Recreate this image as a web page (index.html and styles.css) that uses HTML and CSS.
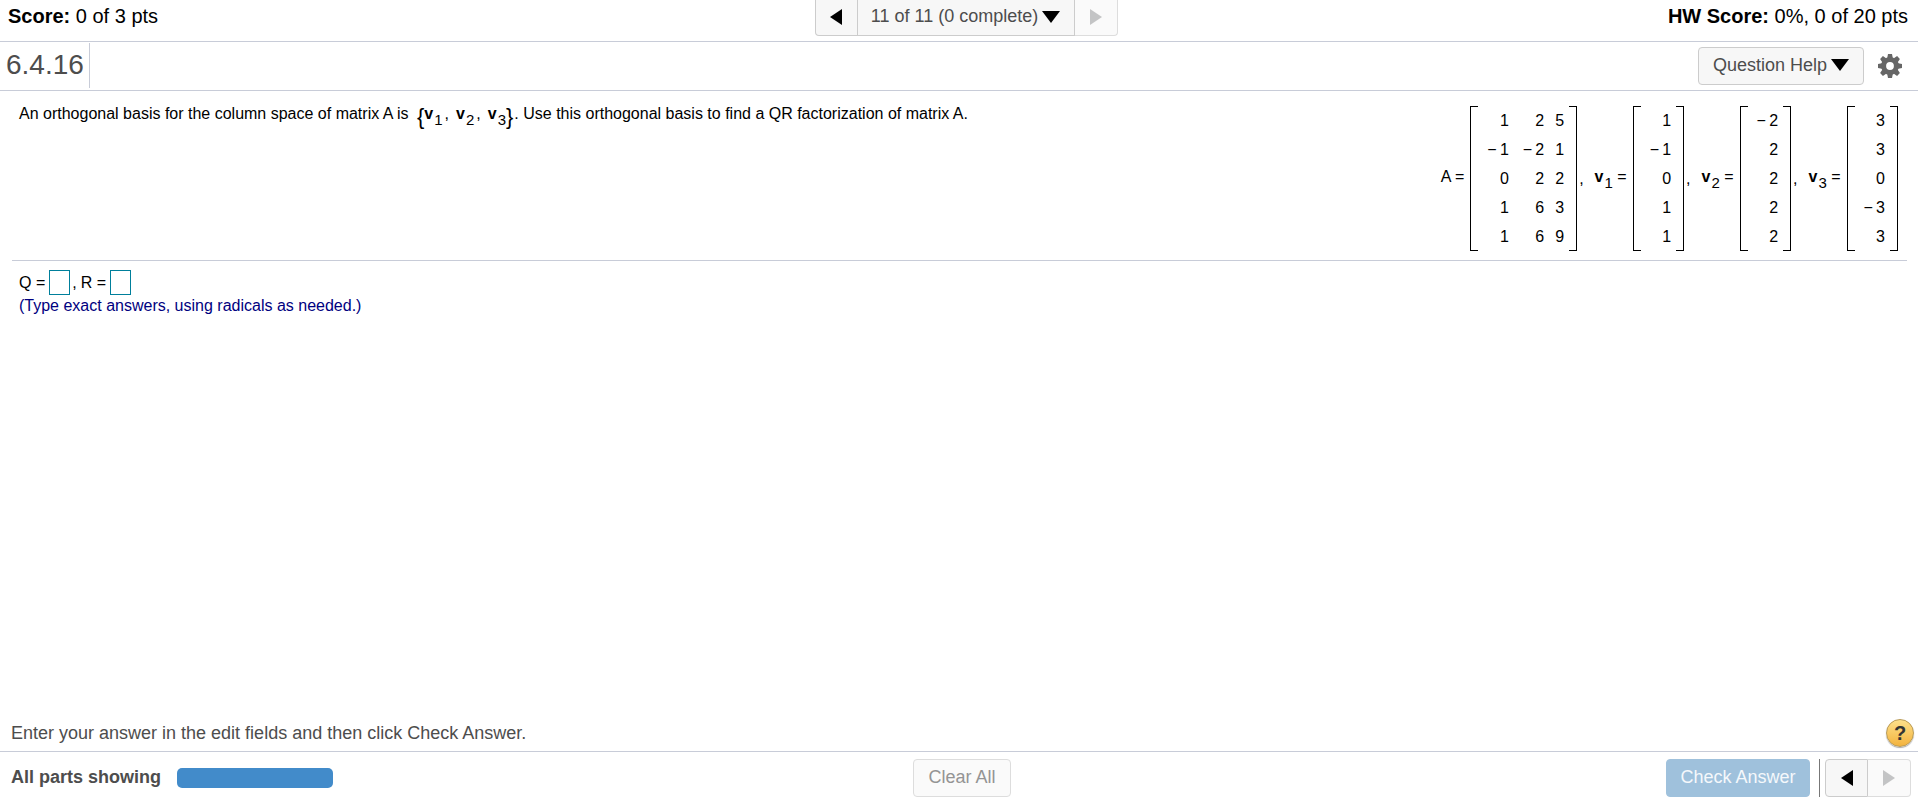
FILE: index.html
```
<!DOCTYPE html>
<html lang="en">
<head>
    <meta charset="UTF-8">
    <meta name="viewport" content="width=device-width, initial-scale=1.0">
    <title>Homework 6.4.16</title>
    <link rel="stylesheet" href="styles.css">
</head>
<body>
    <header class="score-bar">
        <div class="score"><strong>Score:</strong> 0 of 3 pts</div>
        <nav class="pager pager-top">
            <button class="btn btn-arrow" aria-label="Previous question">
                <svg class="arrow" viewBox="0 0 12 16"><path d="M12 0v16L0 8z"/></svg>
            </button>
            <button class="btn btn-list">11 of 11 (0 complete)
                <svg class="caret" viewBox="0 0 18 12"><path d="M0 0h18L9 12z"/></svg>
            </button>
            <button class="btn btn-arrow" aria-label="Next question" disabled>
                <svg class="arrow" viewBox="0 0 12 16"><path d="M0 0v16l12-8z"/></svg>
            </button>
        </nav>
        <div class="score hw-score"><strong>HW Score:</strong> 0%, 0 of 20 pts</div>
    </header>

    <div class="toolbar">
        <h1 class="question-number">6.4.16</h1>
        <div class="toolbar-actions">
            <button class="btn btn-help">Question Help
                <svg class="caret" viewBox="0 0 18 12"><path d="M0 0h18L9 12z"/></svg>
            </button>
            <button class="btn-icon" aria-label="Settings">
                <svg class="gear" viewBox="-12 -12 24 24">
                    <path d="M-3-7l1-5h4l1 5zM-3 7l1 5h4l1-5zM-7-3l-5 1v4l5 1zM7-3l5 1v4l-5 1z"/>
                    <path transform="rotate(45)" d="M-3-7l1-5h4l1 5zM-3 7l1 5h4l1-5zM-7-3l-5 1v4l5 1zM7-3l5 1v4l-5 1z"/>
                    <circle r="6.4" class="gear-ring"/>
                </svg>
            </button>
        </div>
    </div>

    <main class="question">
        <section class="problem">
            <p class="problem-text">An orthogonal basis for the column space of matrix A is
                <span class="set"><span class="brace">{</span><span class="vec"><b>v</b><sub>1</sub></span><span class="comma">,</span><span class="vec"><b>v</b><sub>2</sub></span><span class="comma">,</span><span class="vec"><b>v</b><sub>3</sub></span><span class="brace">}</span></span>.
                Use this orthogonal basis to find a QR factorization of matrix A.</p>
            <div class="givens">
                <div class="given">
                    <span class="name">A =</span>
                    <div class="brackets">
                        <table class="matrix matrix-a">
                            <tr><td>1</td><td>2</td><td>5</td></tr>
                            <tr><td>−&thinsp;1</td><td>−&thinsp;2</td><td>1</td></tr>
                            <tr><td>0</td><td>2</td><td>2</td></tr>
                            <tr><td>1</td><td>6</td><td>3</td></tr>
                            <tr><td>1</td><td>6</td><td>9</td></tr>
                        </table>
                    </div>
                    <span class="sep">,</span>
                </div>
                <div class="given">
                    <span class="name"><span class="vec"><b>v</b><sub>1</sub></span> =</span>
                    <div class="brackets">
                        <table class="matrix">
                            <tr><td>1</td></tr>
                            <tr><td>−&thinsp;1</td></tr>
                            <tr><td>0</td></tr>
                            <tr><td>1</td></tr>
                            <tr><td>1</td></tr>
                        </table>
                    </div>
                    <span class="sep">,</span>
                </div>
                <div class="given">
                    <span class="name"><span class="vec"><b>v</b><sub>2</sub></span> =</span>
                    <div class="brackets">
                        <table class="matrix">
                            <tr><td>−&thinsp;2</td></tr>
                            <tr><td>2</td></tr>
                            <tr><td>2</td></tr>
                            <tr><td>2</td></tr>
                            <tr><td>2</td></tr>
                        </table>
                    </div>
                    <span class="sep">,</span>
                </div>
                <div class="given">
                    <span class="name"><span class="vec"><b>v</b><sub>3</sub></span> =</span>
                    <div class="brackets">
                        <table class="matrix">
                            <tr><td>3</td></tr>
                            <tr><td>3</td></tr>
                            <tr><td>0</td></tr>
                            <tr><td>−&thinsp;3</td></tr>
                            <tr><td>3</td></tr>
                        </table>
                    </div>
                </div>
            </div>
        </section>

        <section class="answer">
            <div class="answer-row">
                <label for="answer-q">Q =</label>
                <input type="text" id="answer-q">
                <span class="answer-sep">,</span>
                <label for="answer-r">R =</label>
                <input type="text" id="answer-r">
            </div>
            <p class="hint">(Type exact answers, using radicals as needed.)</p>
        </section>
    </main>

    <div class="instructions">
        <p>Enter your answer in the edit fields and then click Check Answer.</p>
        <button class="help-badge" aria-label="Help">?</button>
    </div>

    <footer class="bottom-bar">
        <div class="parts">
            <strong>All parts showing</strong>
            <div class="progress"></div>
        </div>
        <button class="btn btn-clear" disabled>Clear All</button>
        <div class="bottom-actions">
            <button class="btn btn-check" disabled>Check Answer</button>
            <nav class="pager pager-bottom">
                <button class="btn btn-arrow" aria-label="Previous">
                    <svg class="arrow" viewBox="0 0 12 16"><path d="M12 0v16L0 8z"/></svg>
                </button>
                <button class="btn btn-arrow" aria-label="Next" disabled>
                    <svg class="arrow" viewBox="0 0 12 16"><path d="M0 0v16l12-8z"/></svg>
                </button>
            </nav>
        </div>
    </footer>
</body>
</html>
```
FILE: styles.css
```
* {
    margin: 0;
    padding: 0;
    box-sizing: border-box;
}

body {
    background: #fff;
    color: #000;
    font-family: "Liberation Sans", Arial, sans-serif;
    font-size: 16px;
    display: flex;
    flex-direction: column;
    min-height: 100vh;
}

button,
input {
    font-family: inherit;
}

/* Buttons */
.btn {
    height: 38px;
    padding-bottom: 1px;
    background: #f7f7f7;
    border: 1px solid #ccc;
    border-radius: 4px;
    color: #4d4d4d;
    font-size: 18px;
    display: flex;
    align-items: center;
    justify-content: center;
    gap: 4px;
    white-space: nowrap;
}

.btn:disabled {
    background: #fafafa;
    border-color: #ddd;
}

.btn-arrow {
    width: 43px;
}

.arrow {
    width: 12px;
    height: 16px;
    fill: #000;
}

.btn:disabled .arrow {
    fill: #c3c4c5;
}

.caret {
    width: 18px;
    height: 12px;
    fill: #000;
}

.pager {
    display: flex;
}

.pager .btn + .btn {
    border-left: 0;
}

.pager .btn:not(:last-child) {
    border-right-color: #ccc;
    border-top-right-radius: 0;
    border-bottom-right-radius: 0;
}

.pager .btn:not(:first-child) {
    border-top-left-radius: 0;
    border-bottom-left-radius: 0;
}

/* Score bar */
.score-bar {
    display: grid;
    grid-template-columns: 1fr auto 1fr;
    align-items: start;
    height: 42px;
    padding: 0 10px 0 8px;
    border-bottom: 1px solid #c8ccd8;
}

.score {
    font-size: 20px;
    line-height: 32px;
}

.hw-score {
    text-align: right;
}

.pager-top {
    margin-left: 16px;
}

.pager-top .btn {
    height: 36px;
    padding-bottom: 2px;
    border-top: 0;
    border-top-left-radius: 0;
    border-top-right-radius: 0;
}

.btn-list {
    width: 217px;
}

/* Toolbar */
.toolbar {
    display: flex;
    justify-content: space-between;
    height: 49px;
    padding: 1px 16px 2px 6px;
    border-bottom: 1px solid #c8ccd8;
}

.question-number {
    padding-right: 5px;
    border-right: 1px solid #c8ccd8;
    color: #4d4d4d;
    font-size: 28px;
    font-weight: normal;
    line-height: 43px;
}

.toolbar-actions {
    display: flex;
    align-items: center;
    gap: 14px;
}

.btn-help {
    width: 166px;
}

.btn-icon {
    background: none;
    border: 0;
    line-height: 0;
}

.gear {
    width: 24px;
    height: 24px;
    fill: #666;
}

.gear-ring {
    fill: #fff;
    stroke: #666;
    stroke-width: 5;
}

/* Question */
.question {
    flex: 1;
    padding: 15px 11px 0 12px;
}

.problem {
    display: flex;
    justify-content: space-between;
    align-items: flex-start;
    padding: 0 9px 9px 7px;
    border-bottom: 1px solid #c8ccd8;
}

.problem-text {
    line-height: 16px;
}

.set {
    margin: 0 1px 0 4px;
}

.brace {
    font-size: 22px;
    line-height: 0;
    vertical-align: -5px;
}

.vec sub {
    margin-left: 1px;
    line-height: 0;
    font-size: 15px;
    vertical-align: -6px;
}

.comma {
    margin: 0 7px 0 2px;
}

.givens {
    display: flex;
}

.given {
    display: flex;
    align-items: center;
}

.name {
    margin-right: 6px;
    padding-bottom: 4px;
    white-space: nowrap;
}

.sep {
    margin: 0 11px 0 2px;
}

.brackets {
    position: relative;
    padding: 0 12px 0 16px;
    border-left: 1px solid #000;
    border-right: 1px solid #000;
}

/* top and bottom lips of the matrix brackets */
.brackets::before,
.brackets::after {
    content: "";
    position: absolute;
    top: 0;
    bottom: 0;
    width: 7px;
    border-top: 1px solid #000;
    border-bottom: 1px solid #000;
}

.brackets::before {
    left: 0;
}

.brackets::after {
    right: 0;
}

.matrix {
    border-collapse: collapse;
}

.matrix td {
    height: 29px;
    text-align: right;
    white-space: nowrap;
}

.matrix-a td:nth-child(2) {
    padding-left: 14px;
}

.matrix-a td:nth-child(3) {
    padding-left: 11px;
}

/* Answer */
.answer {
    padding: 9px 7px;
}

.answer-row {
    display: flex;
    align-items: center;
}

.answer-row input {
    width: 21px;
    height: 25px;
    margin-left: 4px;
    border: 1px solid #007f9b;
    font-size: 16px;
}

.answer-sep {
    margin: 0 4px 0 2px;
}

.hint {
    color: #000080;
    line-height: 22px;
}

/* Instructions and bottom bar */
.instructions {
    display: flex;
    justify-content: space-between;
    align-items: center;
    height: 34px;
    padding: 0 4px 2px 11px;
    color: #4d4d4d;
    font-size: 18px;
}

.help-badge {
    width: 28px;
    height: 28px;
    border: 1px solid #b99a55;
    border-radius: 50%;
    background: linear-gradient(#fde08a, #f3b33e);
    box-shadow: 0 1px 1px #aaa;
    color: #333;
    font-size: 20px;
    font-weight: bold;
}

.bottom-bar {
    display: grid;
    grid-template-columns: 1fr auto 1fr;
    align-items: start;
    height: 54px;
    padding: 7px 7px 0 11px;
    border-top: 1px solid #c8ccd8;
}

.parts {
    display: flex;
    align-items: center;
    gap: 16px;
    height: 38px;
    color: #4d4d4d;
    font-size: 18px;
}

.parts strong {
    padding-bottom: 2px;
}

.progress {
    width: 156px;
    height: 20px;
    background: #428bca;
    border-radius: 5px;
}

.btn-clear {
    width: 98px;
    margin-left: 2px;
}

.btn-clear:disabled {
    color: #949494;
}

.bottom-actions {
    display: flex;
    justify-content: flex-end;
}

.btn-check {
    width: 144px;
}

.btn-check:disabled {
    background: #9fc1dc;
    border-color: #9fc1dc;
    color: #f5f8fb;
}

.pager-bottom {
    margin-left: 9px;
    padding-left: 5px;
    border-left: 1px solid #777;
}
```
